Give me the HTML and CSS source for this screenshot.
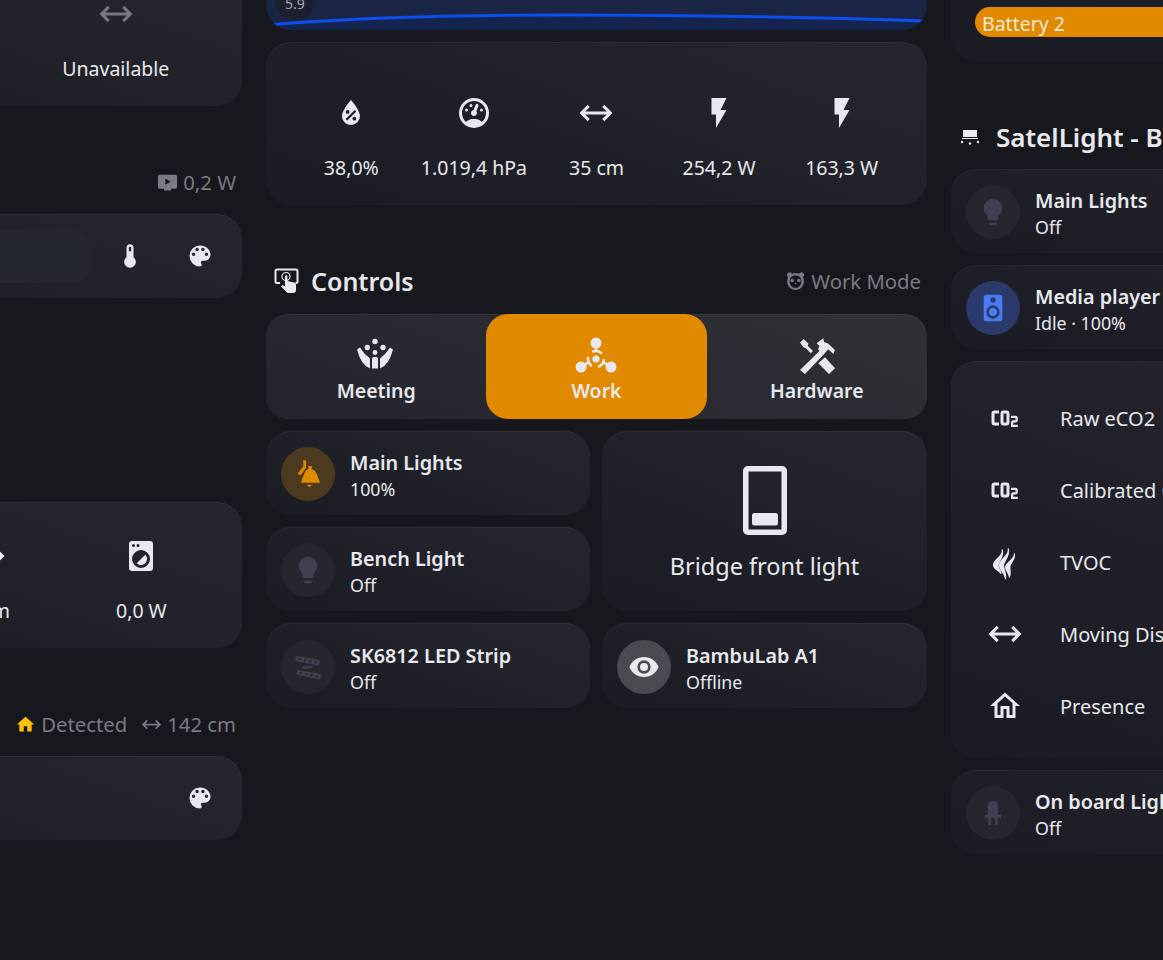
FILE: index.html
```html
<!DOCTYPE html>
<html lang="en">
<head>
    <meta charset="UTF-8">
    <title>Dashboard</title>
    <link rel="stylesheet" href="styles.css">
</head>
<body>
    <div class="page">
        <!-- left column, mostly off screen -->
        <div class="column">
            <div class="card stats stats-3">
                <div></div>
                <div></div>
                <div class="stat dim">
                    <svg class="icon-stat" viewBox="0 0 24 24"><path d="M6.45,17.45L1,12L6.45,6.55L7.86,7.96L4.83,11H19.17L16.14,7.96L17.55,6.55L23,12L17.55,17.45L16.14,16.04L19.17,13H4.83L7.86,16.04L6.45,17.45Z"/></svg>
                    <span class="stat-text">Unavailable</span>
                </div>
            </div>
            <div class="section-head">
                <div class="section-title"></div>
                <div class="section-info">
                    <span class="info-item">
                        <svg class="icon-info" viewBox="0 0 24 24"><path fill-rule="evenodd" d="M3 3H21A2 2 0 0 1 23 5V17A2 2 0 0 1 21 19H16V21H8V19H3A2 2 0 0 1 1 17V5A2 2 0 0 1 3 3M9.5 7.5V14.5L15.5 11Z"/></svg>0,2 W
                    </span>
                </div>
            </div>
            <div class="card light-bar">
                <div class="slider"></div>
                <svg class="icon-bar" viewBox="0 0 24 24"><path d="M15 13V5A3 3 0 0 0 9 5V13A5 5 0 1 0 15 13M12 4A1 1 0 0 1 13 5V8H11V5A1 1 0 0 1 12 4Z"/></svg>
                <svg class="icon-bar" viewBox="0 0 24 24"><path d="M17.5,12A1.5,1.5 0 0,1 16,10.5A1.5,1.5 0 0,1 17.5,9A1.5,1.5 0 0,1 19,10.5A1.5,1.5 0 0,1 17.5,12M14.5,8A1.5,1.5 0 0,1 13,6.5A1.5,1.5 0 0,1 14.5,5A1.5,1.5 0 0,1 16,6.5A1.5,1.5 0 0,1 14.5,8M9.5,8A1.5,1.5 0 0,1 8,6.5A1.5,1.5 0 0,1 9.5,5A1.5,1.5 0 0,1 11,6.5A1.5,1.5 0 0,1 9.5,8M6.5,12A1.5,1.5 0 0,1 5,10.5A1.5,1.5 0 0,1 6.5,9A1.5,1.5 0 0,1 8,10.5A1.5,1.5 0 0,1 6.5,12M12,3A9,9 0 0,0 3,12A9,9 0 0,0 12,21A1.5,1.5 0 0,0 13.5,19.5C13.5,19.11 13.35,18.76 13.11,18.5C12.88,18.23 12.73,17.88 12.73,17.5A1.5,1.5 0 0,1 14.23,16H16A5,5 0 0,0 21,11C21,6.58 16.97,3 12,3Z"/></svg>
            </div>
            <div class="card stats stats-4 after-gap">
                <div></div>
                <div></div>
                <div class="stat">
                    <svg class="icon-stat" viewBox="0 0 24 24"><path d="M6.45,17.45L1,12L6.45,6.55L7.86,7.96L4.83,11H19.17L16.14,7.96L17.55,6.55L23,12L17.55,17.45L16.14,16.04L19.17,13H4.83L7.86,16.04L6.45,17.45Z"/></svg>
                    <span class="stat-text">0 cm</span>
                </div>
                <div class="stat">
                    <svg class="icon-stat" viewBox="0 0 24 24"><path d="M14.83,11.17C16.39,12.73 16.39,15.27 14.83,16.83C13.27,18.39 10.73,18.39 9.17,16.83L14.83,11.17M6,2H18A2,2 0 0,1 20,4V20A2,2 0 0,1 18,22H6A2,2 0 0,1 4,20V4A2,2 0 0,1 6,2M7,4A1,1 0 0,0 6,5A1,1 0 0,0 7,6A1,1 0 0,0 8,5A1,1 0 0,0 7,4M10,4A1,1 0 0,0 9,5A1,1 0 0,0 10,6A1,1 0 0,0 11,5A1,1 0 0,0 10,4M12,8A6,6 0 0,0 6,14A6,6 0 0,0 12,20A6,6 0 0,0 18,14A6,6 0 0,0 12,8Z"/></svg>
                    <span class="stat-text">0,0 W</span>
                </div>
            </div>
            <div class="section-head">
                <div class="section-title"></div>
                <div class="section-info">
                    <span class="info-item">
                        <svg class="icon-info yellow" viewBox="0 0 24 24"><path d="M10,20V14H14V20H19V12H22L12,3L2,12H5V20H10Z"/></svg>Detected
                    </span>
                    <span class="info-item">
                        <svg class="icon-info" viewBox="0 0 24 24"><path d="M6.45,17.45L1,12L6.45,6.55L7.86,7.96L4.83,11H19.17L16.14,7.96L17.55,6.55L23,12L17.55,17.45L16.14,16.04L19.17,13H4.83L7.86,16.04L6.45,17.45Z"/></svg>142 cm
                    </span>
                </div>
            </div>
            <div class="card light-bar">
                <svg class="icon-bar" viewBox="0 0 24 24"><path d="M17.5,12A1.5,1.5 0 0,1 16,10.5A1.5,1.5 0 0,1 17.5,9A1.5,1.5 0 0,1 19,10.5A1.5,1.5 0 0,1 17.5,12M14.5,8A1.5,1.5 0 0,1 13,6.5A1.5,1.5 0 0,1 14.5,5A1.5,1.5 0 0,1 16,6.5A1.5,1.5 0 0,1 14.5,8M9.5,8A1.5,1.5 0 0,1 8,6.5A1.5,1.5 0 0,1 9.5,5A1.5,1.5 0 0,1 11,6.5A1.5,1.5 0 0,1 9.5,8M6.5,12A1.5,1.5 0 0,1 5,10.5A1.5,1.5 0 0,1 6.5,9A1.5,1.5 0 0,1 8,10.5A1.5,1.5 0 0,1 6.5,12M12,3A9,9 0 0,0 3,12A9,9 0 0,0 12,21A1.5,1.5 0 0,0 13.5,19.5C13.5,19.11 13.35,18.76 13.11,18.5C12.88,18.23 12.73,17.88 12.73,17.5A1.5,1.5 0 0,1 14.23,16H16A5,5 0 0,0 21,11C21,6.58 16.97,3 12,3Z"/></svg>
            </div>
        </div>

        <!-- middle column -->
        <div class="column">
            <div class="graph">
                <svg class="graph-line" viewBox="0 0 661 70" preserveAspectRatio="none">
                    <path class="graph-fill" d="M0 65Q120 55 300 55Q480 55 661 61V70H0Z"/>
                    <path class="graph-stroke" d="M0 65Q120 55 300 55Q480 55 661 61"/>
                </svg>
                <span class="graph-badge">5.9</span>
            </div>
            <div class="card stats stats-5 tall">
                <div class="stat">
                    <svg class="icon-stat" viewBox="0 0 24 24"><path d="M12,3.25C12,3.25 6,10 6,14C6,17.32 8.69,20 12,20A6,6 0 0,0 18,14C18,10 12,3.25 12,3.25M14.47,9.97L15.53,11.03L9.53,17.03L8.47,15.97M9.75,10A1.25,1.25 0 0,1 11,11.25A1.25,1.25 0 0,1 9.75,12.5A1.25,1.25 0 0,1 8.5,11.25A1.25,1.25 0 0,1 9.75,10M14.25,14.5A1.25,1.25 0 0,1 15.5,15.75A1.25,1.25 0 0,1 14.25,17A1.25,1.25 0 0,1 13,15.75A1.25,1.25 0 0,1 14.25,14.5Z"/></svg>
                    <span class="stat-text">38,0%</span>
                </div>
                <div class="stat">
                    <svg class="icon-stat" viewBox="0 0 24 24"><path d="M12,2A10,10 0 0,0 2,12A10,10 0 0,0 12,22A10,10 0 0,0 22,12A10,10 0 0,0 12,2M12,4A8,8 0 0,1 20,12C20,14.4 19,16.5 17.3,18C15.9,16.7 14,16 12,16C10,16 8.2,16.7 6.7,18C5,16.5 4,14.4 4,12A8,8 0 0,1 12,4M14,5.89C13.62,5.9 13.26,6.15 13.1,6.54L11.81,9.77L11.71,10C11,10.13 10.41,10.6 10.14,11.26C9.73,12.29 10.23,13.45 11.26,13.86C12.29,14.27 13.45,13.77 13.86,12.74C14.12,12.08 14,11.32 13.57,10.76L13.67,10.5L14.96,7.29L14.97,7.26C15.17,6.75 14.92,6.17 14.41,5.96C14.28,5.91 14.15,5.89 14,5.89M10,6A1,1 0 0,0 9,7A1,1 0 0,0 10,8A1,1 0 0,0 11,7A1,1 0 0,0 10,6M7,9A1,1 0 0,0 6,10A1,1 0 0,0 7,11A1,1 0 0,0 8,10A1,1 0 0,0 7,9M17,9A1,1 0 0,0 16,10A1,1 0 0,0 17,11A1,1 0 0,0 18,10A1,1 0 0,0 17,9Z"/><path d="M6.7,18C8.2,16.7 10,16 12,16C14,16 15.9,16.7 17.3,18C15.9,19.3 14,20 12,20C10,20 8.1,19.3 6.7,18Z"/></svg>
                    <span class="stat-text">1.019,4 hPa</span>
                </div>
                <div class="stat">
                    <svg class="icon-stat" viewBox="0 0 24 24"><path d="M6.45,17.45L1,12L6.45,6.55L7.86,7.96L4.83,11H19.17L16.14,7.96L17.55,6.55L23,12L17.55,17.45L16.14,16.04L19.17,13H4.83L7.86,16.04L6.45,17.45Z"/></svg>
                    <span class="stat-text">35 cm</span>
                </div>
                <div class="stat">
                    <svg class="icon-stat" viewBox="0 0 24 24"><path d="M7,2V13H10V22L17,10H13L17,2H7Z"/></svg>
                    <span class="stat-text">254,2 W</span>
                </div>
                <div class="stat">
                    <svg class="icon-stat" viewBox="0 0 24 24"><path d="M7,2V13H10V22L17,10H13L17,2H7Z"/></svg>
                    <span class="stat-text">163,3 W</span>
                </div>
            </div>
            <div class="section-head">
                <div class="section-title">
                    <svg class="icon-title" viewBox="0 0 26 26">
                        <path class="line" d="M6 15H3A1.5 1.5 0 0 1 1.5 13.5V3A1.5 1.5 0 0 1 3 1.500H22A1.5 1.5 0 0 1 23.5 3V13.5A1.5 1.5 0 0 1 22 15H21.500"/>
                        <circle class="thin" cx="12" cy="8.5" r="4"/>
                        <path d="M11 8.500A1.2 1.2 0 0 1 13.400 8.500V13L20 14.500A2.500 2.500 0 0 1 22 17V22A3 3 0 0 1 19 25H13.500L7 18.500L8.500 17L11 18.500Z"/>
                    </svg>
                    Controls
                </div>
                <div class="section-info">
                    <span class="info-item">
                        <svg class="icon-info" viewBox="0 0 20 20">
                            <path fill-rule="evenodd" d="M3.5 1.5A2.5 2.5 0 0 1 6.5 2.6A9 9 0 0 1 13.5 2.6A2.5 2.5 0 1 1 17.2 5.8C18.5 9.5 18 13 16 15.2C14.5 17.2 12.5 18 10 18C7.5 18 5.500 17.2 4 15.2C2 13 1.5 9.5 2.8 5.8A2.5 2.5 0 0 1 3.5 1.5M10 4.3C7 4.3 4.6 6 4.4 9.5C4.2 13 6.5 16 10 16C13.5 16 15.8 13 15.6 9.5C15.4 6 13 4.3 10 4.3M6.8 7.3A1.7 1.7 0 1 0 6.8 10.7A1.7 1.7 0 1 0 6.8 7.3M13.2 7.3A1.7 1.7 0 1 0 13.2 10.7A1.7 1.7 0 1 0 13.2 7.3M8.8 11.5H11.2L10 12.8Z"/>
                        </svg>Work Mode
                    </span>
                </div>
            </div>
            <div class="card tabs">
                <div class="tab">
                    <svg class="icon-tab" viewBox="0 -1 38 38">
                        <circle cx="18" cy="2.5" r="2.7"/><circle cx="10.3" cy="8.5" r="2.7"/><circle cx="26" cy="8.5" r="2.7"/><circle cx="18" cy="13.5" r="2.4"/>
                        <path d="M15 20A2 2 0 0 1 17 18H19A2 2 0 0 1 21 20V29.500H15Z"/>
                        <path d="M0 10.500L3 8.500Q7 15 13 19.500V29.500Q4 26 0 10.500Z"/>
                        <path d="M36 10.500L33 8.500Q29 15 23 19.500V29.500Q32 26 36 10.500Z"/>
                    </svg>
                    <span>Meeting</span>
                </div>
                <div class="tab active">
                    <svg class="icon-tab hub" viewBox="0 -1 42 38">
                        <circle cx="21" cy="6" r="5.5"/><circle cx="6" cy="30" r="5.5"/><circle cx="36" cy="30" r="5.5"/><circle cx="21" cy="22" r="3.6"/>
                        <path class="hub-line" d="M6 30L14 25M36 30L28 25M21 6V14"/>
                        <circle class="hub-ring" cx="21" cy="22" r="8"/>
                    </svg>
                    <span>Work</span>
                </div>
                <div class="tab">
                    <svg class="icon-tab" viewBox="-1 0 38 38">
                        <path d="M1 4.7L4.7 1L9.5 5.7L8.7 7.7L14 13L11.7 15.3L6.7 10L4.7 9.5Z"/>
                        <path d="M26 19.3L36 30.3L30 36L19.3 25.3Z"/>
                        <path d="M1 32L6 36L24.3 17L21 12.5Z"/>
                        <path d="M17.7 5.3L24.3 .3L25 4L29 5.5L36 12L34.3 16L29.3 11.3L24.3 17L19 11.5L20.5 8Z"/>
                    </svg>
                    <span>Hardware</span>
                </div>
            </div>
            <div class="controls">
                <div class="card row">
                    <div class="bubble on">
                        <svg class="icon-row" viewBox="0 0 24 24">
                            <path d="M12.250 6H14.750V8.500C17.500 9 18.500 11.500 21 18.500H6.750C9.250 11.500 9.750 9 12.250 8.500Z"/>
                            <path d="M11 20H15.250L13 21.750Z"/>
                            <path d="M8.500 1.750H10.500V7.250L6.500 13L4.250 11.750L8.500 6.250Z"/>
                        </svg>
                    </div>
                    <div class="row-text"><div class="row-name">Main Lights</div><div class="row-state">100%</div></div>
                </div>
                <div class="card bridge">
                    <svg class="icon-switch" viewBox="0 0 44 69">
                        <path fill-rule="evenodd" d="M5 0H39A5 5 0 0 1 44 5V64A5 5 0 0 1 39 69H5A5 5 0 0 1 0 64V5A5 5 0 0 1 5 0M5.500 5.500V63.500H38.500V5.500Z"/>
                        <rect x="9" y="47" width="26" height="12.500" rx="2.500"/>
                    </svg>
                    <span class="bridge-name">Bridge front light</span>
                </div>
                <div class="card row">
                    <div class="bubble">
                        <svg class="icon-row" viewBox="0 0 24 24"><path d="M12,2A7,7 0 0,0 5,9C5,11.38 6.19,13.47 8,14.74V17A1,1 0 0,0 9,18H15A1,1 0 0,0 16,17V14.74C17.81,13.47 19,11.38 19,9A7,7 0 0,0 12,2M9,21A1,1 0 0,0 10,22H14A1,1 0 0,0 15,21V20H9V21Z"/></svg>
                    </div>
                    <div class="row-text"><div class="row-name">Bench Light</div><div class="row-state">Off</div></div>
                </div>
                <div class="card row">
                    <div class="bubble">
                        <svg class="icon-row" viewBox="0 0 24 24">
                            <path fill-rule="evenodd" d="M3 3.5L21 7L20.2 10.8L2.2 7.3ZM5 5.3L4.6 6.6L6.4 7L6.7 5.6ZM9 6.1L8.7 7.4L10.4 7.8L10.7 6.4ZM13 6.9L12.7 8.2L14.4 8.6L14.7 7.2ZM17 7.7L16.7 9L18.4 9.4L18.7 8Z"/>
                            <path d="M8 11.5L16 11L15 13L7.5 13.5Z"/>
                            <path fill-rule="evenodd" d="M4 14L22 17.5L21.2 21.3L3.2 17.8ZM6 15.8L5.6 17.1L7.4 17.5L7.7 16.1ZM10 16.6L9.7 17.9L11.4 18.3L11.7 16.9ZM14 17.4L13.7 18.7L15.4 19.1L15.7 17.7ZM18 18.2L17.7 19.5L19.4 19.9L19.7 18.5Z"/>
                        </svg>
                    </div>
                    <div class="row-text"><div class="row-name">SK6812 LED Strip</div><div class="row-state">Off</div></div>
                </div>
                <div class="card row">
                    <div class="bubble grey">
                        <svg class="icon-row" viewBox="0 0 24 24"><path d="M12,9A3,3 0 0,0 9,12A3,3 0 0,0 12,15A3,3 0 0,0 15,12A3,3 0 0,0 12,9M12,17A5,5 0 0,1 7,12A5,5 0 0,1 12,7A5,5 0 0,1 17,12A5,5 0 0,1 12,17M12,4.5C7,4.5 2.73,7.61 1,12C2.73,16.39 7,19.5 12,19.5C17,19.5 21.27,16.39 23,12C21.27,7.61 17,4.5 12,4.5Z"/></svg>
                    </div>
                    <div class="row-text"><div class="row-name">BambuLab A1</div><div class="row-state">Offline</div></div>
                </div>
            </div>
        </div>

        <!-- right column, runs off the window -->
        <div class="column">
            <div class="card battery-card">
                <div class="battery">Battery 2</div>
            </div>
            <div class="section-head">
                <div class="section-title sat">
                    <svg class="icon-sat" viewBox="0 0 20 16">
                        <path d="M3 1H17V8H3Z"/>
                        <path d="M2 9H18V10H2Z"/>
                        <circle cx="2" cy="13" r="1.2"/><circle cx="10" cy="14.5" r="1.2"/><circle cx="18" cy="13" r="1.2"/>
                    </svg>
                    SatelLight - Bedroom
                </div>
            </div>
            <div class="card row">
                <div class="bubble">
                    <svg class="icon-row" viewBox="0 0 24 24"><path d="M12,2A7,7 0 0,0 5,9C5,11.38 6.19,13.47 8,14.74V17A1,1 0 0,0 9,18H15A1,1 0 0,0 16,17V14.74C17.81,13.47 19,11.38 19,9A7,7 0 0,0 12,2M9,21A1,1 0 0,0 10,22H14A1,1 0 0,0 15,21V20H9V21Z"/></svg>
                </div>
                <div class="row-text"><div class="row-name">Main Lights</div><div class="row-state">Off</div></div>
            </div>
            <div class="card row">
                <div class="bubble blue">
                    <svg class="icon-row" viewBox="0 0 24 24"><path d="M12,12A3,3 0 0,0 9,15A3,3 0 0,0 12,18A3,3 0 0,0 15,15A3,3 0 0,0 12,12M12,20A5,5 0 0,1 7,15A5,5 0 0,1 12,10A5,5 0 0,1 17,15A5,5 0 0,1 12,20M12,4A2,2 0 0,1 14,6A2,2 0 0,1 12,8C10.89,8 10,7.1 10,6C10,4.89 10.89,4 12,4M17,2H7C5.89,2 5,2.89 5,4V20A2,2 0 0,0 7,22H17A2,2 0 0,0 19,20V4C19,2.89 18.1,2 17,2Z"/></svg>
                </div>
                <div class="row-text"><div class="row-name">Media player</div><div class="row-state">Idle · 100%</div></div>
            </div>
            <div class="card sensors">
                <div class="sensor">
                    <svg class="icon-stat" viewBox="0 0 24 24"><path d="M5,7A2,2 0 0,0 3,9V15A2,2 0 0,0 5,17H8V15H5V9H8V7H5M11,7A2,2 0 0,0 9,9V15A2,2 0 0,0 11,17H13A2,2 0 0,0 15,15V9A2,2 0 0,0 13,7H11M11,9H13V15H11V9M16,10.5V12H19V13.5H17.5A1.5,1.5 0 0,0 16,15V18H20.5V16.5H17.5V15H19A1.5,1.5 0 0,0 20.5,13.5V12A1.5,1.5 0 0,0 19,10.5H16Z"/></svg>
                    <span>Raw eCO2</span>
                </div>
                <div class="sensor">
                    <svg class="icon-stat" viewBox="0 0 24 24"><path d="M5,7A2,2 0 0,0 3,9V15A2,2 0 0,0 5,17H8V15H5V9H8V7H5M11,7A2,2 0 0,0 9,9V15A2,2 0 0,0 11,17H13A2,2 0 0,0 15,15V9A2,2 0 0,0 13,7H11M11,9H13V15H11V9M16,10.5V12H19V13.5H17.5A1.5,1.5 0 0,0 16,15V18H20.5V16.5H17.5V15H19A1.5,1.5 0 0,0 20.5,13.5V12A1.5,1.5 0 0,0 19,10.5H16Z"/></svg>
                    <span>Calibrated CO2</span>
                </div>
                <div class="sensor">
                    <svg class="icon-stat" viewBox="0 0 36 36">
                        <path class="flame" d="M15.300 6C17 12 7 15 6.500 21C6.500 25 12 26 14 29.300C13.500 26 10.500 24.500 11 21C11.500 17 17 13 15.300 6Z"/>
                        <path class="flame" d="M21.300 5C23 11 13 15 12.500 21C12.500 26 18 29 18.500 34.500C19.500 29 16 25 16.500 21C17 16 23 12 21.300 5Z"/>
                        <path class="flame" d="M27.300 10C28.500 15 19 18 18.700 23C18.700 27 22 29 22.500 33C24 29 22.500 26 22.800 22.500C23.300 19 28.500 15 27.300 10Z"/>
                    </svg>
                    <span>TVOC</span>
                </div>
                <div class="sensor">
                    <svg class="icon-stat" viewBox="0 0 24 24"><path d="M6.45,17.45L1,12L6.45,6.55L7.86,7.96L4.83,11H19.17L16.14,7.96L17.55,6.55L23,12L17.55,17.45L16.14,16.04L19.17,13H4.83L7.86,16.04L6.45,17.45Z"/></svg>
                    <span>Moving Distance</span>
                </div>
                <div class="sensor">
                    <svg class="icon-stat" viewBox="0 0 24 24"><path d="M12 5.69L17 10.19V18H15V12H9V18H7V10.19L12 5.69M12 3L2 12H5V20H11V14H13V20H19V12H22L12 3Z"/></svg>
                    <span>Presence</span>
                </div>
            </div>
            <div class="card row">
                <div class="bubble">
                    <svg class="icon-row" viewBox="0 0 24 24"><path d="M8 7A4 4 0 0 1 16 7V13.500H18V15.500H15.500V21H13.500V15.500H10.500V21H8.500V15.500H6V13.500H8Z"/></svg>
                </div>
                <div class="row-text"><div class="row-name">On board Light</div><div class="row-state">Off</div></div>
            </div>
        </div>
    </div>
</body>
</html>
```

FILE: styles.css
```css
html, body {
    height: 100%;
    margin: 0;
    overflow: hidden;
    background-color: #17181d;
}
body {
    font-family: "Noto Sans", "Open Sans", Arial, sans-serif;
    color: #e8e9ee;
}
svg {
    fill: currentColor;
    flex: none;
    display: block;
}

.page {
    display: grid;
    grid-template-columns: 661px 661px 661px;
    column-gap: 24px;
    margin: -40px 0 0 -419px;
    align-items: start;
}
.column {
    display: flex;
    flex-direction: column;
    gap: 12px;
}

.card {
    box-sizing: border-box;
    border-radius: 25px;
    background: linear-gradient(200deg, #26272e 0%, #1b1c23 100%);
    box-shadow: inset 0 1px 0 rgba(255,255,255,0.05);
}

/* stat cards */
.stats {
    display: grid;
    height: 146px;
    padding: 0 24px;
    align-items: start;
}
.stats.tall {
    height: 163px;
}
.stats-3 { grid-template-columns: repeat(3, 1fr); }
.stats-4 { grid-template-columns: repeat(4, 1fr); }
.stats-5 { grid-template-columns: repeat(5, 1fr); }
.stat {
    display: flex;
    flex-direction: column;
    align-items: center;
    padding-top: 36px;
    font-size: 19.5px;
    white-space: nowrap;
}
.tall .stat {
    padding-top: 53px;
}
.stat-text {
    margin-top: 23px;
    line-height: 28px;
}
.icon-stat {
    width: 36px;
    height: 36px;
}
.dim .icon-stat {
    color: #77787d;
}

/* section headers */
.section-head {
    display: flex;
    justify-content: space-between;
    align-items: center;
    height: 40px;
    margin-top: 44px;
    padding: 0 6px 0 8px;
}
.section-head + .tabs {
    margin-top: 1px;
}
.section-title {
    display: flex;
    align-items: center;
    gap: 11px;
    font-size: 25px;
    font-weight: 600;
}
.section-title.sat {
    gap: 16px;
    padding-left: 1px;
    font-size: 26px;
    white-space: nowrap;
}
.section-info {
    display: flex;
    gap: 14px;
    font-size: 20.3px;
    color: #797a84;
}
.info-item {
    display: flex;
    align-items: center;
    gap: 5px;
}
.icon-info {
    width: 21px;
    height: 21px;
}
.icon-info.yellow {
    color: #ffc107;
}
.icon-title {
    width: 26px;
    height: 26px;
}
.line {
    fill: none;
    stroke: currentColor;
    stroke-width: 2;
}
.thin {
    fill: none;
    stroke: currentColor;
    stroke-width: 1.2;
}
.icon-sat {
    width: 20px;
    height: 16px;
}

/* light bars in the left column */
.light-bar {
    display: flex;
    justify-content: flex-end;
    align-items: center;
    gap: 42px;
    height: 84px;
    padding: 0 28px 0 0;
}
.slider {
    width: 300px;
    height: 54px;
    margin-right: -15px;
    border-radius: 16px;
    background-color: #25272e;
}
.icon-bar {
    width: 28px;
    height: 28px;
}
.after-gap {
    margin-top: 192px;
}

/* graph */
.graph {
    position: relative;
    height: 70px;
    border-radius: 0 0 25px 25px;
    background-color: #1a2445;
    overflow: hidden;
}
.graph-line {
    width: 100%;
    height: 100%;
}
.graph-fill {
    fill: #15244f;
}
.graph-stroke {
    fill: none;
    stroke: #0b4fee;
    stroke-width: 3;
}
.graph-badge {
    position: absolute;
    left: 9px;
    top: 20px;
    width: 40px;
    height: 40px;
    border-radius: 0 0 20px 20px;
    background-color: #1b1f2e;
    color: #a8a9ae;
    font-size: 14px;
    line-height: 47px;
    text-align: center;
}

/* mode tabs */
.tabs {
    display: grid;
    grid-template-columns: repeat(3, 1fr);
    height: 105px;
    border-radius: 22px;
    background: linear-gradient(200deg, #303137 0%, #24252c 100%);
}
.tab {
    display: flex;
    flex-direction: column;
    align-items: center;
    padding-top: 22px;
    border-radius: 22px;
    font-size: 19.5px;
    font-weight: 600;
    line-height: 28px;
}
.tab span {
    margin-top: 1px;
}
.tab.active {
    background-color: #e18a00;
}
.icon-tab {
    width: 38px;
    height: 38px;
    margin-top: 2px;
}
.icon-tab.hub {
    width: 42px;
    margin-top: 0;
    margin-bottom: 2px;
}
.hub-line {
    fill: none;
    stroke: currentColor;
    stroke-width: 2.6;
}
.hub-ring {
    fill: none;
    stroke: currentColor;
    stroke-width: 2.6;
    stroke-dasharray: 10.5 6.25;
}

/* entity rows */
.controls {
    display: grid;
    grid-template-columns: 324px 325px;
    grid-template-rows: 84px 84px 85px;
    gap: 12px;
}
.row {
    display: flex;
    align-items: center;
    gap: 15px;
    min-height: 84px;
    padding: 2px 15px 0;
}
.bubble {
    display: flex;
    justify-content: center;
    align-items: center;
    width: 54px;
    height: 54px;
    border-radius: 50%;
    background-color: #25262e;
    color: #3f4152;
    flex: none;
}
.bubble.on {
    background-color: #4c3a1f;
    color: #e18a00;
}
.bubble.grey {
    background-color: #4a4b50;
    color: #e8e9ee;
}
.bubble.blue {
    background-color: #2a3a6a;
    color: #4a7bf5;
}
.icon-row {
    width: 32px;
    height: 32px;
}
.row-text {
    padding-top: 4px;
    white-space: nowrap;
}
.row-name {
    font-size: 19.8px;
    font-weight: 600;
    line-height: 26px;
}
.row-state {
    font-size: 17.8px;
    line-height: 26px;
}

.bridge {
    grid-column: 2;
    grid-row: 1 / span 2;
    display: flex;
    flex-direction: column;
    align-items: center;
    padding-top: 35px;
}
.icon-switch {
    width: 44px;
    height: 69px;
}
.bridge-name {
    margin-top: 14px;
    font-size: 23.5px;
    line-height: 34px;
}

/* right column */
.battery-card {
    height: 101px;
    padding: 47px 0 0 24px;
    background: linear-gradient(200deg, #1e1f26 0%, #1b1c23 100%);
    box-shadow: none;
}
.battery {
    height: 30px;
    padding-left: 7px;
    border-radius: 15px;
    background-color: #e18a00;
    font-size: 19.5px;
    line-height: 33px;
    color: #f3e6d4;
}
.sensors {
    height: 397px;
    padding: 21px 0 0;
}
.sensor {
    display: flex;
    align-items: center;
    gap: 37px;
    height: 72px;
    padding-left: 36px;
    font-size: 20px;
    white-space: nowrap;
}
.flame {
    stroke: currentColor;
    stroke-width: 1.3;
    stroke-linejoin: round;
}
```
